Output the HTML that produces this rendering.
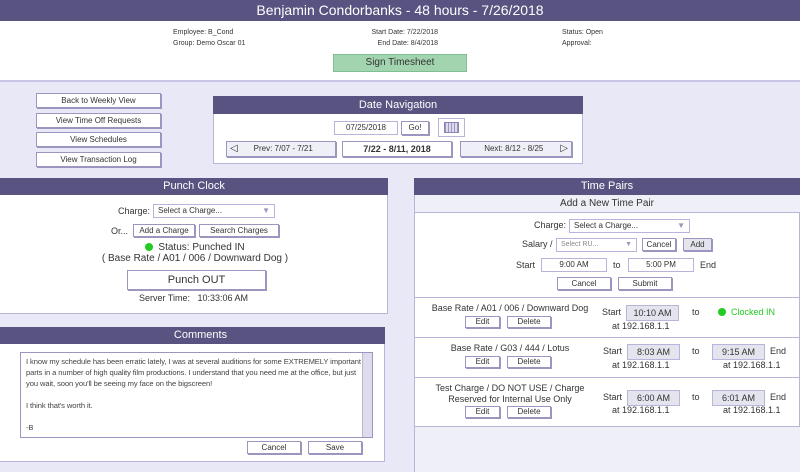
<!DOCTYPE html>
<html><head><style>
*{box-sizing:border-box;margin:0;padding:0}
body{width:800px;height:472px;background:#e8e8f6;font-family:"Liberation Sans",sans-serif;color:#333;position:relative;overflow:hidden;font-size:9px}
.a{position:absolute}
.hd{background:#585380;color:#fff;text-align:center}
.btn{position:absolute;background:#fff;border:1px solid #9a96c0;box-shadow:1px 1px 0 #9a96c0;text-align:center;font-size:8px;color:#333}
.box{position:absolute;background:#fff;border:1px solid #b8b5da}
.inp{position:absolute;background:#fff;border:1px solid #b8b5da;font-size:8px;text-align:center}
.gi{position:absolute;background:#e4e4ee;border:1px solid #b8b5da;font-size:9px;text-align:center;line-height:14px}
.t{position:absolute;white-space:nowrap}
.c{text-align:center}
.dot{display:inline-block;width:8px;height:8px;border-radius:50%;background:#22cc22;vertical-align:-1px;margin-right:5px}
</style></head><body>
<div class="a hd" style="left:0;top:0;width:800px;height:21px;font-size:14px;line-height:21px">Benjamin Condorbanks - 48 hours - 7/26/2018</div>
<div class="a" style="left:0;top:21px;width:800px;height:61px;background:#fff;border-bottom:2px solid #c8c6e6"></div>
<div class="t" style="left:173px;top:27px;font-size:7px;line-height:11px">Employee: B_Cond<br>Group: Demo Oscar 01</div>
<div class="t" style="left:334px;top:27px;font-size:7px;line-height:11px;text-align:right;width:104px">Start Date: 7/22/2018<br>End Date: 8/4/2018</div>
<div class="t" style="left:562px;top:27px;font-size:7px;line-height:11px">Status: Open<br>Approval:</div>
<div class="a" style="left:333px;top:54px;width:134px;height:18px;background:#a3d4b0;border:1px solid #7fbf92;font-size:10px;text-align:center;line-height:16px;color:#333">Sign Timesheet</div>

<div class="btn" style="left:36px;top:93px;width:125px;height:15px;line-height:13px">Back to Weekly View</div>
<div class="btn" style="left:36px;top:113px;width:125px;height:15px;line-height:13px">View Time Off Requests</div>
<div class="btn" style="left:36px;top:132px;width:125px;height:15px;line-height:13px">View Schedules</div>
<div class="btn" style="left:36px;top:152px;width:125px;height:15px;line-height:13px">View Transaction Log</div>

<div class="box" style="left:213px;top:96px;width:370px;height:68px"></div>
<div class="a hd" style="left:213px;top:96px;width:370px;height:18px;font-size:11px;line-height:18px">Date Navigation</div>
<div class="inp" style="left:334px;top:121px;width:64px;height:14px;line-height:12px">07/25/2018</div>
<div class="btn" style="left:401px;top:121px;width:28px;height:14px;line-height:12px">Go!</div>
<div class="a" style="left:438px;top:118px;width:27px;height:19px;border:1px solid #b8b5da;background:#fff"><div style="margin:3px 5px;height:11px;background:repeating-linear-gradient(90deg,#9a96c0 0 1px,#dcdcec 1px 3px);border:1px solid #8a86b0"></div></div>
<div class="btn" style="left:226px;top:141px;width:110px;height:16px;line-height:14px;background:#efeff7">&nbsp;&nbsp;Prev: 7/07 - 7/21<span style="position:absolute;left:3px;top:0;font-size:10px">◁</span></div>
<div class="btn" style="left:342px;top:141px;width:110px;height:16px;line-height:14px;font-weight:bold;font-size:9px">7/22 - 8/11, 2018</div>
<div class="btn" style="left:460px;top:141px;width:112px;height:16px;line-height:14px;background:#efeff7">Next: 8/12 - 8/25&nbsp;&nbsp;<span style="position:absolute;right:3px;top:0;font-size:10px">▷</span></div>

<!-- punch clock -->
<div class="box" style="left:-1px;top:178px;width:389px;height:136px"></div>
<div class="a hd" style="left:0;top:178px;width:388px;height:17px;font-size:11px;line-height:17px">Punch Clock</div>
<div class="t" style="left:118px;top:206px;font-size:9px">Charge:</div>
<div class="inp" style="left:153px;top:204px;width:122px;height:14px;text-align:left;padding-left:4px;line-height:12px">Select a Charge...<span style="position:absolute;right:4px;color:#9a96c0">▼</span></div>
<div class="t" style="left:111px;top:226px;font-size:9px">Or...</div>
<div class="btn" style="left:133px;top:224px;width:62px;height:13px;line-height:11px">Add a Charge</div>
<div class="btn" style="left:199px;top:224px;width:80px;height:13px;line-height:11px">Search Charges</div>
<div class="t c" style="left:100px;top:242px;width:190px;font-size:10px;line-height:11px"><span class="dot"></span>Status: Punched IN<br>( Base Rate / A01 / 006 / Downward Dog )</div>
<div class="btn" style="left:127px;top:270px;width:139px;height:20px;line-height:18px;font-size:11px">Punch OUT</div>
<div class="t" style="left:139px;top:293px;font-size:9px">Server Time: &nbsp;&nbsp;10:33:06 AM</div>

<!-- comments -->
<div class="box" style="left:-1px;top:327px;width:386px;height:135px"></div>
<div class="a hd" style="left:16px;top:327px;width:369px;height:17px;font-size:11px;line-height:17px">Comments</div>
<div class="a" style="left:0;top:327px;width:16px;height:17px;background:#585380"></div>
<div class="a" style="left:20px;top:352px;width:353px;height:86px;border:1px solid #9a96c0;background:#fff"></div>
<div class="a" style="left:362px;top:353px;width:10px;height:84px;background:#dcdcec;border-left:1px solid #b8b5da"></div>
<div class="t" style="left:26px;top:356px;font-size:7.6px;line-height:11px;color:#444;white-space:normal;width:335px;letter-spacing:-0.1px">I know my schedule has been erratic lately, I was at several auditions for some EXTREMELY important parts in a number of high quality film productions. I understand that you need me at the office, but just you wait, soon you'll be seeing my face on the bigscreen!<br><br>I think that's worth it.<br><br>-B</div>
<div class="btn" style="left:247px;top:441px;width:54px;height:13px;line-height:11px">Cancel</div>
<div class="btn" style="left:308px;top:441px;width:54px;height:13px;line-height:11px">Save</div>

<!-- time pairs -->
<div class="a" style="left:414px;top:178px;width:386px;height:294px;background:#efeff7;border-left:1px solid #b8b5da"></div>
<div class="a hd" style="left:414px;top:178px;width:386px;height:17px;font-size:11px;line-height:17px">Time Pairs</div>
<div class="t c" style="left:414px;top:197px;width:386px;font-size:10px;line-height:14px">Add a New Time Pair</div>
<div class="box" style="left:414px;top:212px;width:386px;height:86px"></div>
<div class="t" style="left:534px;top:220px;font-size:9px">Charge:</div>
<div class="inp" style="left:569px;top:219px;width:121px;height:14px;text-align:left;padding-left:4px;line-height:12px">Select a Charge...<span style="position:absolute;right:4px;color:#9a96c0">▼</span></div>
<div class="t" style="left:522px;top:239px;font-size:9px">Salary /</div>
<div class="inp" style="left:556px;top:238px;width:81px;height:14px;text-align:left;padding-left:4px;line-height:12px;color:#888;font-size:7px">Select RU...<span style="position:absolute;right:4px;color:#9a96c0">▼</span></div>
<div class="btn" style="left:642px;top:238px;width:34px;height:13px;line-height:11px">Cancel</div>
<div class="btn" style="left:683px;top:238px;width:29px;height:13px;line-height:11px;background:#e4e4ee">Add</div>
<div class="t" style="left:516px;top:260px;font-size:9px">Start</div>
<div class="inp" style="left:541px;top:258px;width:66px;height:14px;line-height:12px">9:00 AM</div>
<div class="t" style="left:613px;top:260px;font-size:9px">to</div>
<div class="inp" style="left:628px;top:258px;width:66px;height:14px;line-height:12px">5:00 PM</div>
<div class="t" style="left:700px;top:260px;font-size:9px">End</div>
<div class="btn" style="left:557px;top:277px;width:54px;height:13px;line-height:11px">Cancel</div>
<div class="btn" style="left:618px;top:277px;width:54px;height:13px;line-height:11px">Submit</div>

<div class="box" style="left:414px;top:297px;width:386px;height:41px"></div>
<div class="t c" style="left:420px;top:303px;width:180px;font-size:9px">Base Rate / A01 / 006 / Downward Dog</div>
<div class="btn" style="left:465px;top:316px;width:35px;height:12px;line-height:10px">Edit</div>
<div class="btn" style="left:507px;top:316px;width:44px;height:12px;line-height:10px">Delete</div>
<div class="t" style="left:602px;top:307px;font-size:9px">Start</div>
<div class="gi" style="left:626px;top:305px;width:53px;height:16px">10:10 AM</div>
<div class="t" style="left:692px;top:307px;font-size:9px">to</div>
<div class="t" style="left:718px;top:307px;font-size:9px;color:#22cc22"><span class="dot"></span>Clocked IN</div>
<div class="t" style="left:612px;top:321px;font-size:9px">at 192.168.1.1</div>

<div class="box" style="left:414px;top:337px;width:386px;height:41px"></div>
<div class="t c" style="left:420px;top:343px;width:180px;font-size:9px">Base Rate / G03 / 444 / Lotus</div>
<div class="btn" style="left:465px;top:356px;width:35px;height:12px;line-height:10px">Edit</div>
<div class="btn" style="left:507px;top:356px;width:44px;height:12px;line-height:10px">Delete</div>
<div class="t" style="left:603px;top:346px;font-size:9px">Start</div>
<div class="gi" style="left:627px;top:344px;width:53px;height:16px">8:03 AM</div>
<div class="t" style="left:692px;top:346px;font-size:9px">to</div>
<div class="gi" style="left:712px;top:344px;width:53px;height:16px">9:15 AM</div>
<div class="t" style="left:770px;top:346px;font-size:9px">End</div>
<div class="t" style="left:612px;top:360px;font-size:9px">at 192.168.1.1</div>
<div class="t" style="left:723px;top:360px;font-size:9px">at 192.168.1.1</div>

<div class="box" style="left:414px;top:377px;width:386px;height:50px"></div>
<div class="t c" style="left:420px;top:383px;width:180px;font-size:9px;line-height:11px">Test Charge / DO NOT USE / Charge<br>Reserved for Internal Use Only</div>
<div class="btn" style="left:465px;top:406px;width:35px;height:12px;line-height:10px">Edit</div>
<div class="btn" style="left:507px;top:406px;width:44px;height:12px;line-height:10px">Delete</div>
<div class="t" style="left:603px;top:392px;font-size:9px">Start</div>
<div class="gi" style="left:627px;top:390px;width:53px;height:16px">6:00 AM</div>
<div class="t" style="left:692px;top:392px;font-size:9px">to</div>
<div class="gi" style="left:712px;top:390px;width:53px;height:16px">6:01 AM</div>
<div class="t" style="left:770px;top:392px;font-size:9px">End</div>
<div class="t" style="left:612px;top:405px;font-size:9px">at 192.168.1.1</div>
<div class="t" style="left:723px;top:405px;font-size:9px">at 192.168.1.1</div>
</body></html>
